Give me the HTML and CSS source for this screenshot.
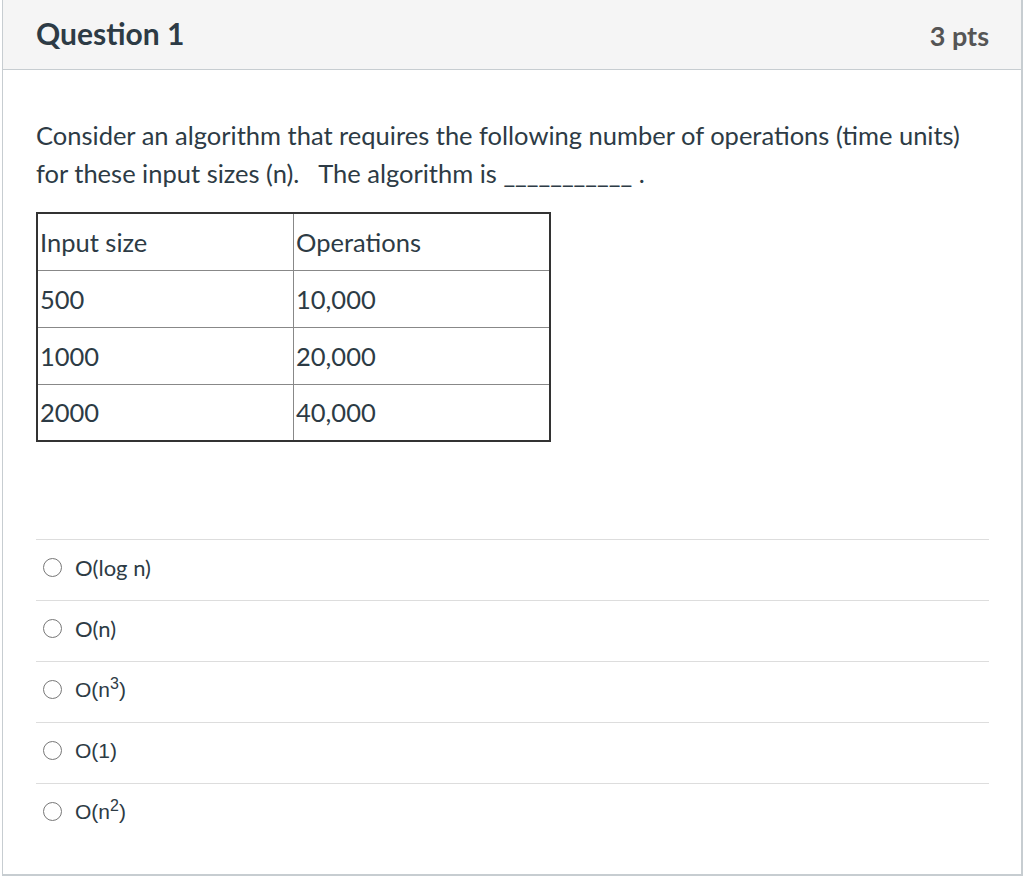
FILE: index.html
```html
<!DOCTYPE html>
<html>
<head>
<meta charset="utf-8">
<link rel="stylesheet" href="styles.css">
</head>
<body>
<div class="question">
  <div class="q-header">
    <span class="q-title">Question 1</span>
    <span class="q-points">3 pts</span>
  </div>
  <div class="q-body">
    <p class="q-text">Consider an algorithm that requires the following number of operations (time units) for these input sizes (n).&nbsp;&nbsp; The algorithm is ___________ .</p>
    <table class="q-table">
      <tr><td>Input size</td><td>Operations</td></tr>
      <tr><td>500</td><td>10,000</td></tr>
      <tr><td>1000</td><td>20,000</td></tr>
      <tr><td>2000</td><td>40,000</td></tr>
    </table>
    <div class="answers">
      <div class="answer"><span class="radio"></span><span class="label">O(log n)</span></div>
      <div class="answer"><span class="radio"></span><span class="label">O(n)</span></div>
      <div class="answer"><span class="radio"></span><span class="label alt">O(n<sup>3</sup>)</span></div>
      <div class="answer"><span class="radio"></span><span class="label alt">O(1)</span></div>
      <div class="answer"><span class="radio"></span><span class="label alt">O(n<sup>2</sup>)</span></div>
    </div>
  </div>
</div>
</body>
</html>
```

FILE: styles.css
```css
html, body {
  margin: 0;
  padding: 0;
  background: #fff;
}
body {
  font-family: Lato, "Open Sans", sans-serif;
  color: #2d3b45;
}
.question {
  margin-left: 2px;
  width: 1021px;
  height: 876px;
  box-sizing: border-box;
  border-style: solid;
  border-color: #c7cdd1;
  border-width: 0 2px 2px 1px;
}
.q-header {
  height: 70px;
  box-sizing: border-box;
  background: #f5f5f5;
  border-bottom: 1px solid #c7cdd1;
  display: flex;
  align-items: center;
  justify-content: space-between;
  padding: 0 32px 3px 33px;
}
.q-title {
  font-size: 30px;
  font-weight: 700;
  color: #2d3b45;
}
.q-points {
  font-size: 27px;
  font-weight: 700;
  color: #555;
  padding-top: 4px;
}
.q-body {
  padding: 46px 32px 0 33px;
}
.q-text {
  margin: 0;
  font-size: 25.5px;
  line-height: 38px;
}
.q-table {
  margin-top: 20px;
  border-collapse: collapse;
  border: 2px solid #333;
  width: 515px;
  font-size: 25.5px;
}
.q-table td {
  border: 1px solid #888;
  width: 50%;
  height: 57px;
  box-sizing: border-box;
  padding: 0 2px;
  vertical-align: middle;
}
.answers {
  margin-top: 97px;
}
.answer {
  border-top: 1px solid #ddd;
  height: 60px;
  display: flex;
  align-items: center;
  padding-left: 7px;
}
.radio {
  width: 17px;
  height: 17px;
  border: 1.5px solid #777;
  border-radius: 50%;
  margin-right: 13px;
  margin-bottom: 5px;
  flex: none;
}
.label {
  font-size: 22px;
  color: #2d3b45;
  margin-bottom: 5px;
}
.label.alt {
  font-family: "Liberation Sans", Arial, sans-serif;
  font-size: 21px;
}
.label sup {
  font-size: 16px;
  line-height: 0;
  vertical-align: 8px;
}
```
